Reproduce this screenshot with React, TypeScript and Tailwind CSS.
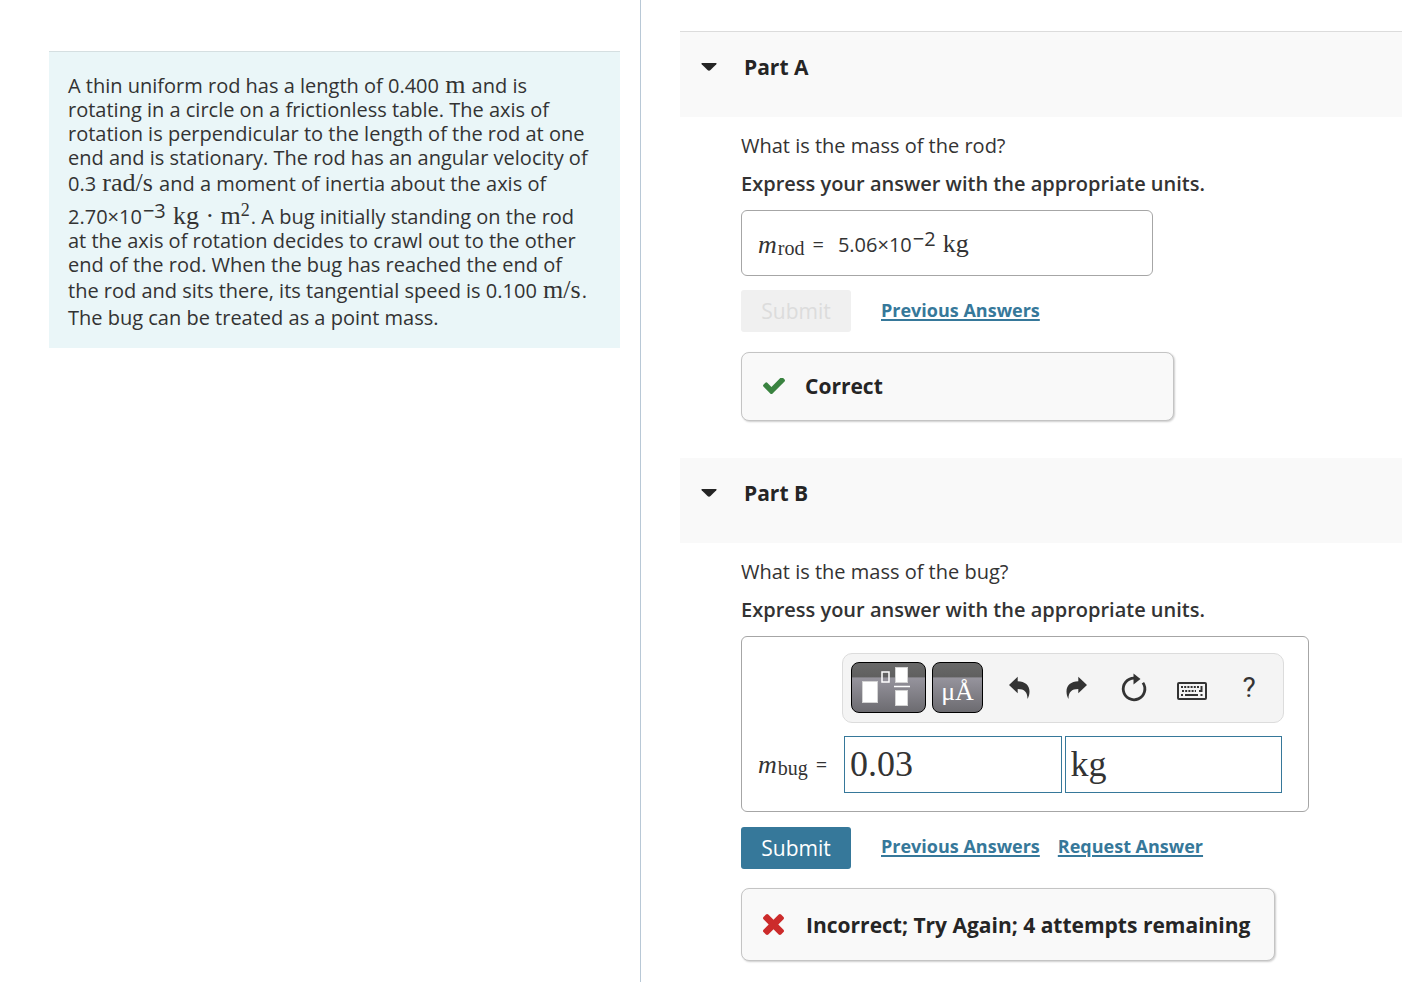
import React from "react";

const serif = "font-['Liberation_Serif',serif]";

function Sup({ children }: { children: React.ReactNode }) {
  return <sup className="-top-1.5 mx-px text-xl leading-none">{children}</sup>;
}

function Unit({ children }: { children: React.ReactNode }) {
  return <span className={`${serif} mx-px inline-block text-[26px] leading-[25px]`}>{children}</span>;
}

function Variable({ sub }: { sub: string }) {
  return (
    <span className={`${serif} text-[26px] leading-6`}>
      <i>m</i>
      <sub className="-bottom-0.5 ml-px text-xl leading-none">{sub}</sub>
    </span>
  );
}

function PartHeader({ title, ruled }: { title: string; ruled?: boolean }) {
  return (
    <header className={`bg-[#f9f9f9] pt-5 pb-[33px] pl-5 ${ruled ? "border-t border-[#dcdcdc]" : ""}`}>
      <h2>
        <button type="button" aria-expanded="true" className="flex h-8 items-center gap-[26px] text-[21px] font-bold text-[#252525]">
          <svg width="18" height="10" viewBox="0 0 18 10" className="mb-0.5" aria-hidden="true">
            <path d="M2 1h14q1.200 0.300 0.300 1.300l-5.800 5.800q-1.500 1.300-3 0l-5.800-5.800q-0.900-1 0.300-1.300z" fill="currentColor" />
          </svg>
          {title}
        </button>
      </h2>
    </header>
  );
}

function Prompt({ question }: { question: string }) {
  return (
    <>
      <p className="text-xl leading-6">{question}</p>
      <p className="mt-3.5 text-xl leading-6 font-semibold">Express your answer with the appropriate units.</p>
    </>
  );
}

function TextLink({ children }: { children: React.ReactNode }) {
  return (
    <a href="#" className="text-lg font-bold text-[#36789a] underline decoration-2 underline-offset-2">
      {children}
    </a>
  );
}

function Feedback({ children, className }: { children: React.ReactNode; className: string }) {
  return (
    <div
      role="status"
      className={`flex items-center rounded-lg border border-[#c4c4c4] bg-[#f9f9f9] pl-[21px] text-[21px] font-bold text-[#252525] shadow-[1px_1px_2px_rgba(0,0,0,0.2)] ${className}`}
    >
      {children}
    </div>
  );
}

const glossy =
  "h-[51px] rounded-lg border border-black bg-[linear-gradient(to_bottom,#696969_0%,#5f5f5f_29%,#96949d_30%,#6c6b70_100%)] text-white";

const UNDO = "M0 9L8.700 0.700V5.300C16 5.300 20.500 9.500 20.500 15.500C20.500 18.500 19.800 20.500 18.500 23C18.500 16 15.500 13 8.700 13V17.300Z";

function Toolbar() {
  const item = "flex h-10 w-10 items-center justify-center text-[#333]";
  return (
    <div role="toolbar" aria-label="Math tools" className="flex items-center gap-1.5 rounded-[10px] border border-[#dcdcdc] bg-[#f4f4f4] px-2 py-2 pb-[9px]">
      <button type="button" aria-label="Templates" className={`${glossy} w-[75px]`}>
        <svg width="73" height="49" viewBox="0 0 73 49" aria-hidden="true">
          <g fill="#fff" stroke="#d4d4d4">
            <rect x="10.500" y="18.500" width="15" height="21" />
            <rect x="43.500" y="4.500" width="12" height="15" />
            <rect x="43.500" y="27.500" width="12" height="15" />
          </g>
          <rect x="30" y="9" width="7" height="10" fill="none" stroke="#fff" strokeWidth="1.500" />
          <path d="M42 23.500h16" stroke="#fff" strokeWidth="1.500" />
        </svg>
      </button>
      <button type="button" aria-label="Units" className={`${glossy} ${serif} w-[51px] pt-2 text-[26px]`}>
        μÅ
      </button>
      <div className="mr-1.5 ml-2.5 flex flex-1 justify-between">
        <button type="button" aria-label="Undo" className={item}>
          <svg width="21" height="24" viewBox="0 0 21 24" aria-hidden="true">
            <path d={UNDO} fill="currentColor" />
          </svg>
        </button>
        <button type="button" aria-label="Redo" className={item}>
          <svg width="21" height="24" viewBox="0 0 21 24" aria-hidden="true">
            <path d={UNDO} fill="currentColor" transform="translate(21 0) scale(-1 1)" />
          </svg>
        </button>
        <button type="button" aria-label="Reset" className={item}>
          <svg width="28" height="30" viewBox="0 0 28 30" aria-hidden="true">
            <path d="M14 5.200A10.800 10.800 0 1 0 22.900 9.800" fill="none" stroke="currentColor" strokeWidth="2.800" />
            <path d="M13.500 0.500L20.500 6L13.500 11.500Z" fill="currentColor" />
          </svg>
        </button>
        <button type="button" aria-label="Keyboard shortcuts" className={item}>
          <svg width="30" height="18" viewBox="0 0 30 18" className="mt-1.5" aria-hidden="true">
            <rect x="1" y="1" width="28" height="16" rx="1" fill="none" stroke="currentColor" strokeWidth="2" />
            <path d="M4 5h18M5 9h14" stroke="currentColor" strokeWidth="2" strokeDasharray="2 1.200" fill="none" />
            <path d="M4 13h2M8 13h13M23.500 13h2M22 9h3.500M24.500 4v6" stroke="currentColor" strokeWidth="2" fill="none" />
          </svg>
        </button>
        <button type="button" aria-label="Help" className={`${item} font-[Roboto,sans-serif] text-[28px]`}>
          ?
        </button>
      </div>
    </div>
  );
}

export default function App() {
  return (
    <main className="grid min-h-screen grid-cols-[641fr_761fr] bg-white font-['Open_Sans',sans-serif] text-[#333]">
      <aside className="border-r border-[#b8c8d6] pt-[51px] pr-5 pl-[49px]">
        <p className="border-t border-[#d5dfe1] bg-[#eaf6f8] pt-5 pr-7 pb-[18px] pl-[19px] text-xl leading-6">
          A thin uniform rod has a length of 0.400 <Unit>m</Unit> and is rotating in a circle on a frictionless table. The
          axis of rotation is perpendicular to the length of the rod at one end and is stationary. The rod has an angular
          velocity of 0.3 <Unit>rad/s</Unit> and a moment of inertia about the axis of{" "}
          <span className="inline-block pt-[7px] whitespace-nowrap">
            2.70×10<Sup>−3</Sup>{" "}
            <Unit>
              kg · m<sup className="-top-2 text-lg leading-none">2</sup>
            </Unit>
            .
          </span>{" "}
          A bug initially standing on the rod at the axis of rotation decides to crawl out to the other end of the rod.
          When the bug has reached the end of the rod and sits there, its tangential speed is 0.100{" "}
          <span className="inline-block pb-[3px] whitespace-nowrap">
            <Unit>m/s</Unit>.
          </span>{" "}
          The bug can be treated as a point mass.
        </p>
      </aside>

      <div className="pt-[31px] pl-[39px]">
        <section>
          <PartHeader title="Part A" ruled />
          <div className="pt-[17px] pb-[37px] pl-[61px]">
            <Prompt question="What is the mass of the rod?" />
            <div className="mt-3.5 flex h-[66px] w-[412px] items-center rounded-md border border-[#a6a6a6] pt-1 pl-4 text-xl">
              <Variable sub="rod" />
              <span className="ml-2">=</span>
              <span className="ml-3.5">
                5.06×10<Sup>−2</Sup> <Unit>kg</Unit>
              </span>
            </div>
            <div className="mt-3.5 flex items-center">
              <button type="button" disabled className="h-[42px] w-[110px] rounded-[3px] bg-[#f0f0f0] pt-0.5 text-[21px] text-[#dcdcdc]">
                Submit
              </button>
              <span className="mb-0.5 ml-[30px]">
                <TextLink>Previous Answers</TextLink>
              </span>
            </div>
            <Feedback className="mt-5 h-[69px] w-[433px] gap-5">
              <svg width="22" height="17" viewBox="121 442 1550 1100" className="text-[#3a8340]" aria-hidden="true">
                <path
                  fill="currentColor"
                  d="M1671 566q0 40-28 68l-724 724-136 136q-28 28-68 28t-68-28l-136-136-362-362q-28-28-28-68t28-68l136-136q28-28 68-28t68 28l294 295 656-657q28-28 68-28t68 28l136 136q28 28 28 68z"
                />
              </svg>
              Correct
            </Feedback>
          </div>
        </section>

        <section>
          <PartHeader title="Part B" />
          <div className="pt-[17px] pb-5 pl-[61px]">
            <Prompt question="What is the mass of the bug?" />
            <div className="mt-3.5 grid w-[568px] grid-cols-[84px_442px] gap-y-[13px] rounded-md border border-[#a6a6a6] pt-4 pb-[18px] pl-4">
              <div className="col-start-2">
                <Toolbar />
              </div>
              <label htmlFor="bug-value" className="flex items-center gap-2 text-xl">
                <Variable sub="bug" />
                <span>=</span>
              </label>
              <div className={`${serif} flex gap-[3px] px-0.5 text-4xl`}>
                <input
                  id="bug-value"
                  defaultValue="0.03"
                  className="h-[57px] min-w-0 flex-1 border border-[#36789a] bg-white px-[5px] pb-0.5 outline-none"
                />
                <input
                  aria-label="Units"
                  defaultValue="kg"
                  className="h-[57px] min-w-0 flex-1 border border-[#36789a] bg-white px-[5px] pb-0.5 outline-none"
                />
              </div>
            </div>
            <div className="mt-[15px] flex items-center">
              <button type="button" className="h-[42px] w-[110px] rounded-[3px] bg-[#36789a] pt-0.5 text-[21px] text-white">
                Submit
              </button>
              <span className="mb-1 ml-[30px] flex gap-[18px]">
                <TextLink>Previous Answers</TextLink>
                <TextLink>Request Answer</TextLink>
              </span>
            </div>
            <Feedback className="mt-[19px] h-[73px] w-fit gap-[22px] pr-6">
              <svg width="21" height="21" viewBox="302 366 1188 1188" className="text-[#cc2b2b]" aria-hidden="true">
                <path
                  fill="currentColor"
                  d="M1490 1322q0 40-28 68l-136 136q-28 28-68 28t-68-28l-294-294-294 294q-28 28-68 28t-68-28l-136-136q-28-28-28-68t28-68l294-294-294-294q-28-28-28-68t28-68l136-136q28-28 68-28t68 28l294 294 294-294q28-28 68-28t68 28l136 136q28 28 28 68t-28 68l-294 294 294 294q28 28 28 68z"
                />
              </svg>
              <span className="pt-0.5">Incorrect; Try Again; 4 attempts remaining</span>
            </Feedback>
          </div>
        </section>
      </div>
    </main>
  );
}
